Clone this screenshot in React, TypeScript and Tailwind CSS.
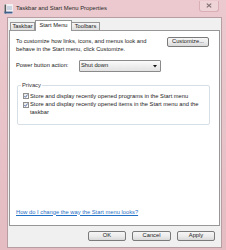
import React from "react";

function Check() {
  return (
    <span className="w-[6px] h-[6px] shrink-0 border border-[#8f8f8f] bg-linear-to-br from-[#e4e4e4] to-[#ffffff] flex items-center justify-center">
      <svg width="4" height="4" viewBox="0 0 4 4">
        <path d="M0.4 2 L1.5 3.3 L3.6 0.5" stroke="#4a64a0" strokeWidth="0.9" fill="none" />
      </svg>
    </span>
  );
}

function Btn({ label, w }: { label: string; w: string }) {
  return (
    <div
      className={`${w} h-[10px] border border-[#7a7a7a] rounded-[2px] bg-linear-to-b from-[#f6f6f6] via-[#ececec] to-[#d9d9d9] flex items-center justify-center text-[5.75px] leading-none text-[#222]`}
    >
      {label}
    </div>
  );
}

export default function App() {
  return (
    <div className="w-[226px] h-[250px] bg-linear-to-b from-[#ebc9ce] to-[#e4bcc2] flex flex-col font-['Liberation_Sans',sans-serif] text-[#222] overflow-hidden">
      {/* Title bar */}
      <div className="h-[17px] flex items-center pl-[4px] pr-[7px] shrink-0">
        <svg width="9" height="10" viewBox="0 0 9 10" className="shrink-0">
          <rect x="0" y="0" width="9" height="10" fill="#f3eef0" />
          <rect x="0.5" y="0.5" width="1.6" height="9" fill="#5a5a5a" />
          <rect x="0.5" y="7.6" width="8" height="1.9" fill="#3f5f8f" />
          <rect x="3" y="2" width="5" height="4" fill="#c9d3e0" />
        </svg>
        <span className="ml-[3px] text-[5.9px] leading-none text-[#2a2a2a]">
          Taskbar and Start Menu Properties
        </span>
        <div className="ml-auto w-[20px] h-[11px] mt-[-5px] rounded-b-[3px] border border-t-0 border-[#d9aeb5] bg-[#eed3d7] flex items-center justify-center">
          <svg width="6" height="5" viewBox="0 0 6 5">
            <path d="M0.8 0.6 L5.2 4.4 M5.2 0.6 L0.8 4.4" stroke="#7a6a6c" strokeWidth="1.1" />
          </svg>
        </div>
      </div>

      {/* Client area */}
      <div className="ml-[7px] mr-[4px] mb-[2px] flex-1 border border-[#b89ea3] bg-[#f0f0f0] flex flex-col px-[1px] pt-[2px]">
        {/* Tabs */}
        <div className="h-[10px] flex items-end pl-[1px] text-[5.75px] leading-none relative z-10">
          <div className="w-[25px] h-[8px] border border-b-0 border-[#979797] bg-linear-to-b from-[#f6f6f6] to-[#dedede] flex items-center justify-center">
            Taskbar
          </div>
          <div className="w-[37px] h-[11px] mb-[-1px] border border-b-0 border-[#979797] bg-white flex items-center justify-center pb-[1px]">
            Start Menu
          </div>
          <div className="w-[28px] h-[8px] border border-b-0 border-l-0 border-[#979797] bg-linear-to-b from-[#f6f6f6] to-[#dedede] flex items-center justify-center">
            Toolbars
          </div>
        </div>

        {/* Panel */}
        <div className="h-[196px] border border-[#979797] bg-white flex flex-col pl-[6px] pr-[10px] pt-[6px] text-[5.75px] leading-[7.5px]">
          <div className="flex items-start justify-between">
            <div className="pt-[1px]">
              To customize how links, icons, and menus look and
              <br />
              behave in the Start menu, click Customize.
            </div>
            <Btn label="Customize..." w="w-[42px]" />
          </div>

          <div className="mt-[7px] h-[12px] flex items-center">
            <div className="w-[63px]">Power button action:</div>
            <div className="w-[82px] h-[12px] border border-[#8a8a8a] rounded-[1px] bg-linear-to-b from-[#fafafa] to-[#e2e2e2] flex items-center pl-[1px] pr-[3px]">
              <span>Shut down</span>
              <svg width="4" height="3" viewBox="0 0 4 3" className="ml-auto">
                <path d="M0 0 L4 0 L2 2.5 Z" fill="#111" />
              </svg>
            </div>
          </div>

          <fieldset className="mt-[10px] ml-[1px] mr-[-1px] border border-[#d5dfe5] rounded-[2px] pl-[5px] pb-[8px]">
            <legend className="ml-[-2px] px-[1px] text-[#333]">Privacy</legend>
            <div className="mt-[3px] flex items-center gap-[1px]">
              <Check />
              <span>Store and display recently opened programs in the Start menu</span>
            </div>
            <div className="mt-[1px] flex items-start gap-[1px]">
              <span className="mt-[1px]">
                <Check />
              </span>
              <span>
                Store and display recently opened items in the Start menu and the
                <br />
                taskbar
              </span>
            </div>
          </fieldset>

          <div className="mt-auto mb-[9px] text-[#1f6fc5] underline">
            How do I change the way the Start menu looks?
          </div>
        </div>

        {/* Buttons */}
        <div className="pt-[5px] flex justify-end pr-[5px] gap-[6px]">
          <Btn label="OK" w="w-[38px]" />
          <Btn label="Cancel" w="w-[39px]" />
          <Btn label="Apply" w="w-[38px]" />
        </div>
      </div>
    </div>
  );
}
